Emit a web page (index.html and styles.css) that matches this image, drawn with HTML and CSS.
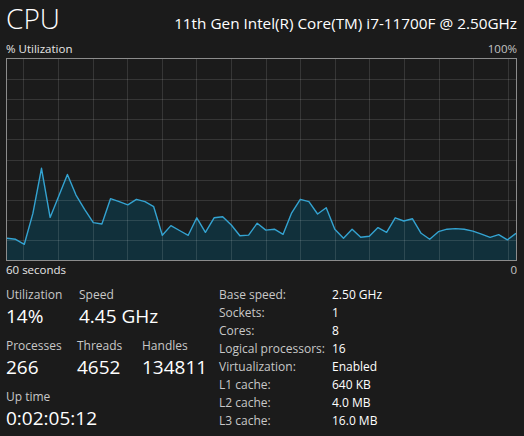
FILE: index.html
```html
<!DOCTYPE html>
<html>
<head>
    <title>CPU</title>
    <link rel="stylesheet" href="styles.css">
</head>
<body>
    <div class="page">
        <div class="header">
            <h1 class="title">CPU</h1>
            <div class="model">11th Gen Intel(R) Core(TM) i7-11700F @ 2.50GHz</div>
        </div>

        <div class="axis axis-top">
            <span>% Utilization</span>
            <span class="axis-max">100%</span>
        </div>
        <div class="graph">
            <svg id="chart" width="509" height="201" viewBox="0 0 509 201"></svg>
        </div>
        <div class="axis axis-bottom">
            <span>60 seconds</span>
            <span class="axis-min">0</span>
        </div>

        <div class="details">
            <div class="stats">
                <div class="stat-row">
                    <div class="stat stat-util">
                        <div class="stat-label">Utilization</div>
                        <div class="stat-value">14%</div>
                    </div>
                    <div class="stat">
                        <div class="stat-label">Speed</div>
                        <div class="stat-value">4.45 GHz</div>
                    </div>
                </div>
                <div class="stat-row">
                    <div class="stat stat-proc">
                        <div class="stat-label">Processes</div>
                        <div class="stat-value">266</div>
                    </div>
                    <div class="stat stat-threads">
                        <div class="stat-label">Threads</div>
                        <div class="stat-value">4652</div>
                    </div>
                    <div class="stat">
                        <div class="stat-label">Handles</div>
                        <div class="stat-value">134811</div>
                    </div>
                </div>
                <div class="stat-row">
                    <div class="stat">
                        <div class="stat-label">Up time</div>
                        <div class="stat-value">0:02:05:12</div>
                    </div>
                </div>
            </div>

            <div class="specs">
                <span class="spec-name">Base speed:</span><span>2.50 GHz</span>
                <span class="spec-name">Sockets:</span><span>1</span>
                <span class="spec-name">Cores:</span><span>8</span>
                <span class="spec-name">Logical processors:</span><span>16</span>
                <span class="spec-name">Virtualization:</span><span>Enabled</span>
                <span class="spec-name">L1 cache:</span><span>640 KB</span>
                <span class="spec-name">L2 cache:</span><span>4.0 MB</span>
                <span class="spec-name">L3 cache:</span><span>16.0 MB</span>
            </div>
        </div>
    </div>

    <script>
    // last 60 samples of total CPU usage, in percent, oldest first
    var samples = [
        10.8, 10.3, 7.8, 23.2, 45.6, 21.2, 31.8, 42.6, 32.3, 25.2,
        18.6, 17.9, 30.5, 29.0, 27.4, 30.2, 29.0, 26.5, 12.3, 17.1,
        14.7, 12.3, 21.0, 13.8, 21.0, 21.5, 17.4, 12.1, 12.4, 18.3,
        14.9, 15.3, 12.8, 23.5, 30.2, 29.0, 22.9, 26.0, 15.3, 10.8,
        15.3, 11.3, 11.8, 16.1, 13.8, 21.0, 19.4, 20.5, 13.3, 10.3,
        14.1, 15.3, 15.6, 15.3, 14.4, 12.9, 11.3, 12.6, 10.0, 13.3
    ];

    function drawChart() {
        var svg = document.getElementById("chart");
        var w = 509, h = 201;
        var html = "";

        var line = [];
        for (var i = 0; i < samples.length; i++) {
            var x = i * w / (samples.length - 1);
            var y = h - samples[i] / 100 * h;
            line.push(x.toFixed(1) + "," + y.toFixed(1));
        }
        var area = "0," + h + " " + line.join(" ") + " " + w + "," + h;
        html += '<polygon class="chart-fill" points="' + area + '"/>';

        for (var r = 1; r < 10; r++) {
            var gy = Math.round(r * h / 10) + 0.5;
            html += '<line class="chart-grid" x1="0" y1="' + gy + '" x2="' + w + '" y2="' + gy + '"/>';
        }
        for (var gx = 16.3; gx < w; gx += 34.6) {
            var cx = Math.round(gx) + 0.5;
            html += '<line class="chart-grid" x1="' + cx + '" y1="0" x2="' + cx + '" y2="' + h + '"/>';
        }

        html += '<polyline class="chart-line" points="' + line.join(" ") + '"/>';
        svg.innerHTML = html;
    }

    drawChart();
    </script>
</body>
</html>
```

FILE: styles.css
```css
body {
    margin: 0;
    background-color: #1b1b1b;
    color: #ffffff;
    font-family: "Open Sans", "Noto Sans", sans-serif;
}

.page {
    padding: 0 7px 0 6px;
}

.header {
    display: flex;
    justify-content: space-between;
    align-items: baseline;
    height: 40px;
}

.title {
    margin: 0;
    font-size: 28px;
    font-weight: 300;
    line-height: 36px;
}

.model {
    font-size: 15.3px;
}

.axis {
    display: flex;
    justify-content: space-between;
    font-size: 11.5px;
    line-height: 18px;
    color: #e6e6e6;
}

.axis-max,
.axis-min {
    color: #c4c4c4;
}

.graph {
    width: 509px;
    height: 201px;
    border: 1px solid #8c8c8c;
}

.graph svg {
    display: block;
}

.chart-fill {
    fill: #11303b;
}

.chart-grid {
    stroke: rgba(255, 255, 255, 0.12);
    stroke-width: 1;
}

.chart-line {
    fill: none;
    stroke: #34a3d1;
    stroke-width: 1.4;
    stroke-linejoin: round;
}

.details {
    display: flex;
    margin-top: 7px;
}

.stats {
    width: 213px;
}

.stat-row {
    display: flex;
    margin-bottom: 8px;
}

.stat-util {
    width: 73px;
}

.stat-proc {
    width: 71px;
}

.stat-threads {
    width: 65px;
}

.stat-label {
    font-size: 12px;
    line-height: 17px;
    color: #c8c8c8;
}

.stat-value {
    font-size: 19px;
    line-height: 26px;
}

.specs {
    display: grid;
    grid-template-columns: 113px auto;
    grid-auto-rows: 18px;
    align-content: start;
    font-size: 12px;
    line-height: 18px;
}

.spec-name {
    color: #c8c8c8;
}
```
